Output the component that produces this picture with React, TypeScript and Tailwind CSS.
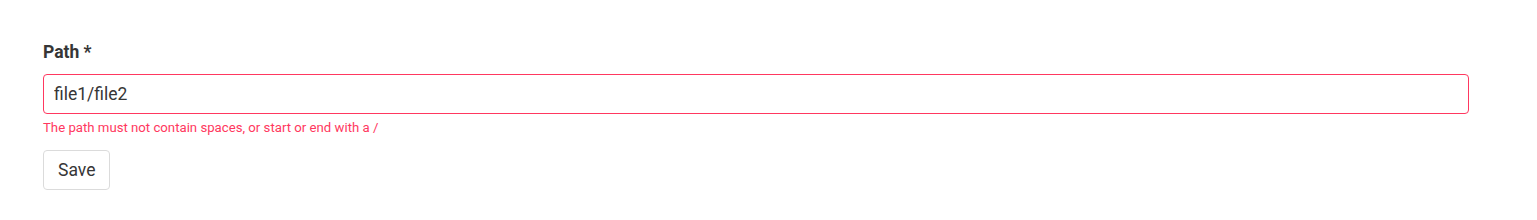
import { useState } from "react";

export default function App() {
  const [path, setPath] = useState("file1/file2");

  return (
    <div className="min-h-[220px] bg-white pl-[43px] pt-[40px] font-['Roboto',sans-serif] text-[#363636]">
      <div className="w-[1426px]">
        {/* Path field */}
        <div className="mb-3">
          <label className="mb-[10px] block text-[17.5px] font-bold leading-6">Path *</label>
          <input
            value={path}
            onChange={(e) => setPath(e.target.value)}
            className="block h-10 w-full rounded-[4px] border border-[#ff3860] px-[10px] text-[17.5px] text-[#363636] outline-none"
          />
          <p className="mt-1 text-[13.2px] leading-5 text-[#ff3860]">
            The path must not contain spaces, or start or end with a /
          </p>
        </div>

        <button className="h-10 rounded-[4px] border border-[#dbdbdb] bg-white px-[14px] text-[17.5px] text-[#363636]">
          Save
        </button>
      </div>
    </div>
  );
}
